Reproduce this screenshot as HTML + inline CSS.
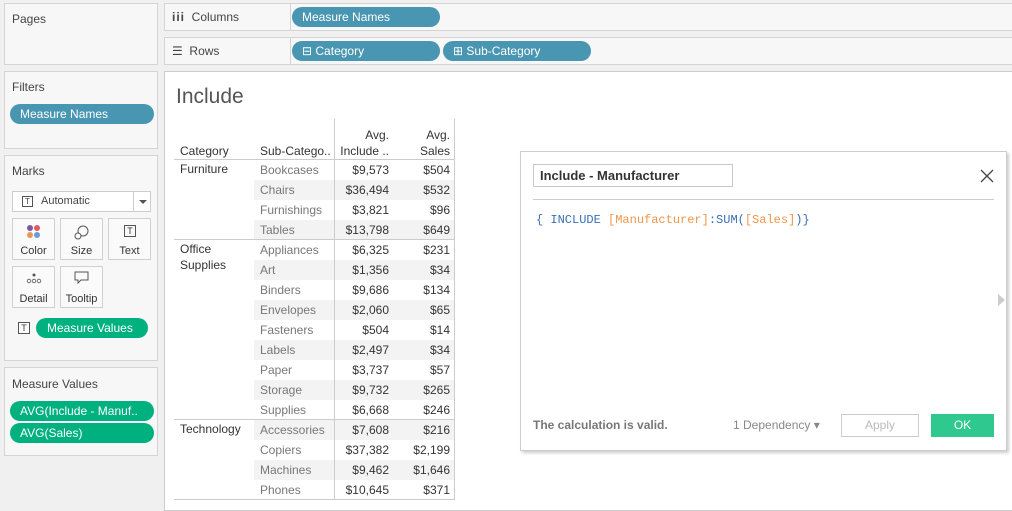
<!DOCTYPE html>
<html><head><style>
*{box-sizing:border-box;margin:0;padding:0}
body{width:1012px;height:503px;background:#f0f0f0;font-family:"Liberation Sans",sans-serif;font-size:12px;color:#333;position:relative;overflow:hidden}
.abs{position:absolute}
.panel{position:absolute;background:#f7f7f7;border:1px solid #d4d4d4}
.ptitle{position:absolute;left:7px;top:8px;font-size:12px;color:#444}
.pill{position:absolute;height:20px;border-radius:10px;color:#fff;font-size:12px;line-height:20px;padding-left:10px;white-space:nowrap;overflow:hidden}
.blue{background:#4996b2}
.green{background:#00b180}
.card{position:absolute;width:43px;height:42px;border:1px solid #d0d0d0;background:#fafafa;text-align:center;font-size:11px;color:#333}
.row{position:absolute;left:0;height:20px;line-height:20px}
.c{position:absolute}
</style></head><body>
<div class="panel" style="left:4px;top:3px;width:154px;height:62px"><div class="ptitle">Pages</div></div>
<div class="panel" style="left:4px;top:71px;width:154px;height:78px"><div class="ptitle">Filters</div>
<div class="pill blue" style="left:5px;top:32px;width:144px">Measure Names</div></div>
<div class="panel" style="left:4px;top:155px;width:154px;height:206px"><div class="ptitle">Marks</div>
<div class="abs" style="left:7px;top:35px;width:139px;height:21px;border:1px solid #ccc;background:#fff;font-size:11px;line-height:19px;padding-left:28px;color:#444">Automatic
<span class="abs" style="left:9px;top:4px;width:11px;height:11px;border:1px solid #555;font-size:8px;line-height:9px;text-align:center">T</span>
<span class="abs" style="left:120px;top:0;width:1px;height:19px;background:#ccc"></span>
<span class="abs" style="left:126px;top:8px;border-left:4px solid transparent;border-right:4px solid transparent;border-top:4px solid #555"></span></div>
<div class="card" style="left:7px;top:62px"><svg class="abs" style="left:13px;top:5px" width="16" height="16"><circle cx="4" cy="4" r="3" fill="#7a5a99"/><circle cx="11" cy="4" r="3" fill="#e05a60"/><circle cx="4" cy="11" r="3" fill="#e8955a"/><circle cx="11" cy="11" r="3" fill="#6b9bd1"/></svg><div class="abs" style="left:0;width:41px;top:26px">Color</div></div>
<div class="card" style="left:55px;top:62px"><svg class="abs" style="left:13px;top:5px" width="16" height="16"><circle cx="9" cy="7" r="5" fill="none" stroke="#555"/><circle cx="4" cy="12" r="3" fill="#fafafa" stroke="#555"/></svg><div class="abs" style="left:0;width:41px;top:26px">Size</div></div>
<div class="card" style="left:103px;top:62px"><span class="abs" style="left:15px;top:6px;width:12px;height:12px;border:1px solid #555;font-size:9px;line-height:10px">T</span><div class="abs" style="left:0;width:41px;top:26px">Text</div></div>
<div class="card" style="left:7px;top:110px"><svg class="abs" style="left:12px;top:5px" width="18" height="12"><circle cx="9" cy="3" r="1.5" fill="#555"/><circle cx="4" cy="9" r="1.8" fill="none" stroke="#555" stroke-width=".8"/><circle cx="9" cy="9" r="1.8" fill="none" stroke="#555" stroke-width=".8"/><circle cx="14" cy="9" r="1.8" fill="none" stroke="#555" stroke-width=".8"/></svg><div class="abs" style="left:0;width:41px;top:26px">Detail</div></div>
<div class="card" style="left:55px;top:110px"><svg class="abs" style="left:13px;top:4px" width="16" height="14"><path d="M1 1h13v8H7l-3 3V9H1z" fill="none" stroke="#555"/></svg><div class="abs" style="left:0;width:41px;top:26px">Tooltip</div></div>
<span class="abs" style="left:13px;top:166px;width:12px;height:12px;border:1px solid #555;font-size:9px;line-height:10px;text-align:center;background:#fff">T</span>
<div class="pill green" style="left:31px;top:162px;width:112px;padding-left:11px">Measure Values</div>
</div>
<div class="panel" style="left:4px;top:367px;width:154px;height:89px"><div class="ptitle" style="top:9px">Measure Values</div>
<div class="pill green" style="left:5px;top:33px;width:144px">AVG(Include - Manuf..</div>
<div class="pill green" style="left:5px;top:55px;width:144px">AVG(Sales)</div></div>
<div class="panel" style="left:164px;top:3px;width:860px;height:28px;background:#f7f7f7">
<div class="abs" style="left:7px;top:6px;font-size:12px;color:#444"><b style="letter-spacing:1px">iii</b>&nbsp; Columns</div>
<div class="abs" style="left:125px;top:0;width:1px;height:26px;background:#d4d4d4"></div>
<div class="pill blue" style="left:127px;top:3px;width:148px">Measure Names</div></div>
<div class="panel" style="left:164px;top:37px;width:860px;height:28px;background:#f7f7f7">
<div class="abs" style="left:7px;top:6px;font-size:12px;color:#444">☰&nbsp; Rows</div>
<div class="abs" style="left:125px;top:0;width:1px;height:26px;background:#d4d4d4"></div>
<div class="pill blue" style="left:127px;top:3px;width:148px">⊟ Category</div>
<div class="pill blue" style="left:278px;top:3px;width:148px">⊞ Sub-Category</div></div>
<div class="abs" style="left:164px;top:71px;width:860px;height:440px;background:#fff;border:1px solid #ccc"></div>
<div class="abs" style="left:176px;top:85px;font-size:21px;color:#555">Include</div>
<div class="abs" style="left:174px;top:119px;width:282px;height:384px">
<div id="rows" class="abs" style="left:80px;top:41px;width:200px"></div>
<div class="abs" style="left:160px;top:0;width:1px;height:380px;background:#ccc"></div>
<div class="abs" style="left:280px;top:0;width:1px;height:380px;background:#ccc"></div>
<div class="abs" style="left:0;top:40px;width:281px;height:1px;background:#ccc"></div>
<div class="abs" style="left:0;top:300px;width:281px;height:1px;background:#ccc"></div>
<div class="abs" style="left:0;top:120px;width:281px;height:1px;background:#ccc"></div>
<div class="abs" style="left:0;top:380px;width:281px;height:1px;background:#ccc"></div>
<div class="abs" style="left:6px;top:25px">Category</div>
<div class="abs" style="left:86px;top:25px">Sub-Catego..</div>
<div class="abs" style="left:160px;top:8px;width:55px;text-align:right;line-height:16px">Avg.<br>Include ..</div>
<div class="abs" style="left:220px;top:8px;width:56px;text-align:right;line-height:16px">Avg.<br>Sales</div>
<div class="abs" style="left:6px;top:42px;line-height:16px">Furniture</div>
<div class="abs" style="left:6px;top:122px;line-height:16px">Office<br>Supplies</div>
<div class="abs" style="left:6px;top:302px;line-height:16px">Technology</div>
</div>
<div class="abs" style="left:520px;top:151px;width:487px;height:300px;background:#fff;border:1px solid #ccc;box-shadow:2px 2px 3px rgba(0,0,0,.2)">
<div class="abs" style="left:12px;top:12px;width:200px;height:23px;border:1px solid #c8c8c8;font-size:13px;font-weight:bold;color:#333;padding:3px 6px">Include - Manufacturer</div>
<svg class="abs" style="left:459px;top:17px" width="14" height="14"><path d="M1 1L13 13M13 1L1 13" stroke="#444" stroke-width="1.3"/></svg>
<div class="abs" style="left:12px;top:47px;width:461px;height:1px;background:#ccc"></div>
<div class="abs" style="left:15px;top:61px;font-family:'Liberation Mono',monospace;font-size:12px;color:#3a6fb5;white-space:pre">{ INCLUDE <span style="color:#f0954a">[Manufacturer]</span>:SUM(<span style="color:#f0954a">[Sales]</span>)}</div>
<div class="abs" style="left:477px;top:142px;border-top:6px solid transparent;border-bottom:6px solid transparent;border-left:7px solid #ccc"></div>
<div class="abs" style="left:12px;top:266px;font-size:12px;font-weight:bold;color:#777">The calculation is valid.</div>
<div class="abs" style="left:212px;top:266px;font-size:12px;color:#888">1 Dependency ▾</div>
<div class="abs" style="left:320px;top:262px;width:78px;height:23px;border:1px solid #ccc;color:#bbb;text-align:center;line-height:21px">Apply</div>
<div class="abs" style="left:410px;top:262px;width:63px;height:23px;background:#2fc88f;color:#fff;text-align:center;line-height:22px">OK</div>
</div>
<script>
var d=[["Bookcases","$9,573","$504"],["Chairs","$36,494","$532"],["Furnishings","$3,821","$96"],["Tables","$13,798","$649"],["Appliances","$6,325","$231"],["Art","$1,356","$34"],["Binders","$9,686","$134"],["Envelopes","$2,060","$65"],["Fasteners","$504","$14"],["Labels","$2,497","$34"],["Paper","$3,737","$57"],["Storage","$9,732","$265"],["Supplies","$6,668","$246"],["Accessories","$7,608","$216"],["Copiers","$37,382","$2,199"],["Machines","$9,462","$1,646"],["Phones","$10,645","$371"]];
var h="";var alt=[1,3,5,7,9,11,13,15];
d.forEach(function(r,i){var bg=alt.indexOf(i)>=0?"#f3f3f3":"#ffffff";
h+='<div class="row" style="top:'+(i*20)+'px;width:200px;background:'+bg+'"><span class="c" style="left:6px;color:#777">'+r[0]+'</span><span class="c" style="left:80px;width:55px;text-align:right">'+r[1]+'</span><span class="c" style="left:140px;width:56px;text-align:right">'+r[2]+'</span></div>';});
document.getElementById("rows").innerHTML=h;
</script>
</body></html>
